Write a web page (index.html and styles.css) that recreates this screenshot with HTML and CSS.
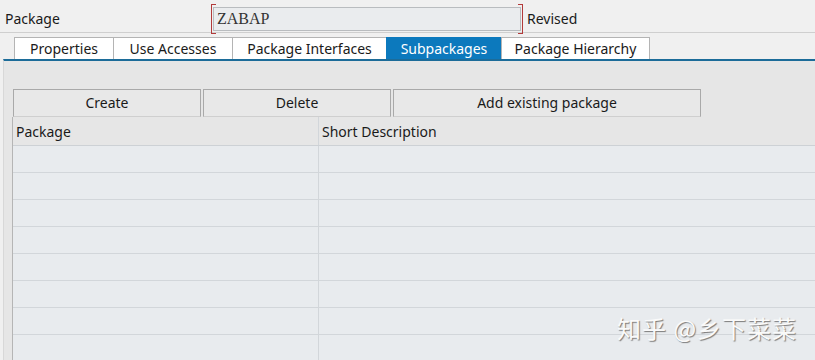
FILE: index.html
```html
<!DOCTYPE html>
<html>
<head>
<meta charset="utf-8">
<link rel="stylesheet" href="styles.css">
</head>
<body>
<div class="screen">
  <div class="header">
    <div class="label">Package</div>
    <div class="field"><span>ZABAP</span></div>
    <div class="status">Revised</div>
  </div>
  <div class="tabs">
    <div class="tab w1">Properties</div>
    <div class="tab w2">Use Accesses</div>
    <div class="tab w3">Package Interfaces</div>
    <div class="tab w4 active">Subpackages</div>
    <div class="tab w5">Package Hierarchy</div>
  </div>
  <div class="panel">
    <div class="toolbar">
      <div class="btn b1">Create</div>
      <div class="btn b2">Delete</div>
      <div class="btn b3">Add existing package</div>
    </div>
    <div class="table">
      <div class="row head"><div class="c1">Package</div><div class="c2">Short Description</div></div>
      <div class="row"><div class="c1"></div><div class="c2"></div></div>
      <div class="row"><div class="c1"></div><div class="c2"></div></div>
      <div class="row"><div class="c1"></div><div class="c2"></div></div>
      <div class="row"><div class="c1"></div><div class="c2"></div></div>
      <div class="row"><div class="c1"></div><div class="c2"></div></div>
      <div class="row"><div class="c1"></div><div class="c2"></div></div>
      <div class="row"><div class="c1"></div><div class="c2"></div></div>
      <div class="row"><div class="c1"></div><div class="c2"></div></div>
    </div>
  </div>
  <div class="watermark">知乎 @乡下菜菜</div>
</div>
</body>
</html>
```
FILE: styles.css
```css
html, body {
  margin: 0;
  padding: 0;
}
body {
  background: #f0f0f0;
  font-family: "Noto Sans", "Open Sans", sans-serif;
  font-size: 14px;
  color: #1a1a1a;
}
.screen {
  position: relative;
  width: 815px;
  height: 360px;
  overflow: hidden;
  background: #f0f0f0;
}
.header {
  box-sizing: border-box;
  display: flex;
  align-items: center;
  height: 33px;
  padding-top: 5px;
  border-bottom: 1px solid #cfcfcf;
}
.label {
  width: 205px;
  padding-left: 5px;
}
.field {
  position: relative;
  box-sizing: border-box;
  width: 308px;
  height: 24px;
  margin-left: 3px;
  background: #eaecee;
  border: 1px solid #b9bcbf;
  font-family: "Liberation Serif", serif;
  font-size: 16px;
  display: flex;
  align-items: center;
  padding-left: 3px;
  color: #333;
}
.field::before, .field::after {
  content: "";
  position: absolute;
  width: 4px;
  top: -4px;
  bottom: -4px;
  border-top: 1px solid #b23a3a;
  border-bottom: 1px solid #b23a3a;
}
.field::before {
  left: -3px;
  border-left: 1px solid #b23a3a;
}
.field::after {
  right: -3px;
  border-right: 1px solid #b23a3a;
}
.status {
  margin-left: 6px;
}
.tabs {
  display: flex;
  margin-top: 4px;
  padding-left: 14px;
  height: 22px;
}
.tab {
  box-sizing: border-box;
  background: #fff;
  border: 1px solid #b4b4b4;
  border-bottom: none;
  border-right: none;
  text-align: center;
  line-height: 21px;
}
.tab.w5 { border-right: 1px solid #b4b4b4; }
.w1 { width: 99px; }
.w2 { width: 119px; }
.w3 { width: 154px; }
.w4 { width: 115px; }
.w5 { width: 149px; }
.tab.active {
  background: #0c79bd;
  color: #fff;
  border-color: #0c79bd;
}
.panel {
  margin-left: 3px;
  border-top: 2px solid #1c6c99;
  background: #e6e6e6;
  height: 300px;
  padding-top: 28px;
  border-left: 1px solid #d8d8d8;
}
.toolbar {
  display: flex;
  gap: 2px;
  padding-left: 9px;
}
.btn {
  box-sizing: border-box;
  height: 28px;
  line-height: 26px;
  text-align: center;
  background: #e8e8e8;
  border: 1px solid #a9a9a9;
  border-bottom-color: #cfcfcf;
}
.b1 { width: 188px; }
.b2 { width: 188px; }
.b3 { width: 308px; }
.table {
  margin-left: 8px;
  border-left: 1px solid #b5b5b5;
}
.row {
  display: flex;
  height: 26px;
  border-bottom: 1px solid #d2d6da;
  background: #e8ebee;
}
.row.head {
  height: 28px;
  background: #e6e6e6;
  border-bottom-color: #cdd1d5;
  line-height: 30px;
}
.c1 {
  box-sizing: border-box;
  width: 306px;
  padding-left: 3px;
  border-right: 1px solid #d2d6da;
}
.c2 {
  flex: 1;
  padding-left: 3px;
}
.watermark {
  position: absolute;
  left: 617px;
  top: 310px;
  font-family: "Noto Sans CJK SC", sans-serif;
  font-size: 24px;
  color: #fafafa;
  text-shadow: 1px 1px 1px #7a7a7a;
  letter-spacing: 1px;
}
```
